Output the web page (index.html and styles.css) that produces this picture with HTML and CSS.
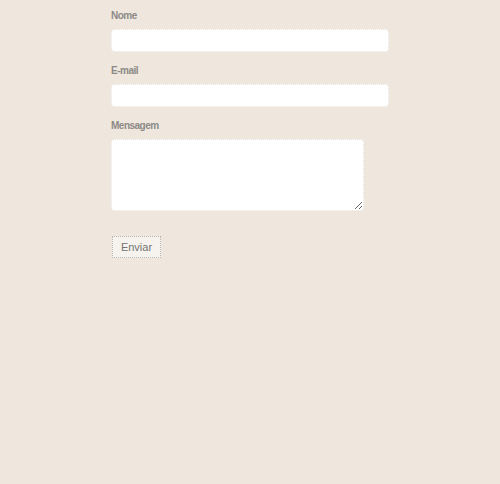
FILE: index.html
```html
<!DOCTYPE html>
<html lang="pt">
<head>
    <meta charset="UTF-8">
    <meta name="viewport" content="width=device-width, initial-scale=1.0">
    <title>Contato</title>
    <link rel="stylesheet" href="styles.css">
</head>
<body>
    <form class="contact-form" onsubmit="return false">
        <div class="field">
            <label for="nome">Nome</label>
            <input type="text" id="nome" name="nome">
        </div>
        <div class="field">
            <label for="email">E-mail</label>
            <input type="email" id="email" name="email">
        </div>
        <div class="field">
            <label for="mensagem">Mensagem</label>
            <textarea id="mensagem" name="mensagem"></textarea>
        </div>
        <div class="actions">
            <button type="submit" class="send-button">Enviar</button>
        </div>
    </form>
</body>
</html>
```

FILE: styles.css
```css
* {
    margin: 0;
    padding: 0;
    box-sizing: border-box;
}
body {
    background-color: #efe7dd;
    font-family: "Liberation Sans", Arial, sans-serif;
    height: 100vh;
}
.contact-form {
    width: 278px;
    margin: 0 auto;
    padding-top: 9px;
}
.field {
    display: flex;
    flex-direction: column;
    align-items: flex-start;
    margin-bottom: 12px;
}
.field label {
    font-size: 10px;
    font-weight: bold;
    letter-spacing: -0.5px;
    color: #8c8a87;
    line-height: 14px;
    margin-bottom: 6px;
}
.field input {
    width: 100%;
    height: 23px;
    background: #fff;
    border: 1px dotted #e6e2de;
    border-radius: 4px;
    outline: none;
}
.field textarea {
    width: 253px;
    height: 72px;
    background: #fff;
    border: 1px dotted #e6e2de;
    border-radius: 4px;
    outline: none;
    resize: both;
}
.actions {
    padding-top: 13px;
    padding-left: 1px;
}
.send-button {
    width: 49px;
    height: 22px;
    font-family: "Liberation Sans", Arial, sans-serif;
    font-size: 11px;
    color: #757370;
    background: #f6f3ef;
    border: 1px dotted #b9b6b2;
    border-radius: 0;
    cursor: pointer;
}
```
